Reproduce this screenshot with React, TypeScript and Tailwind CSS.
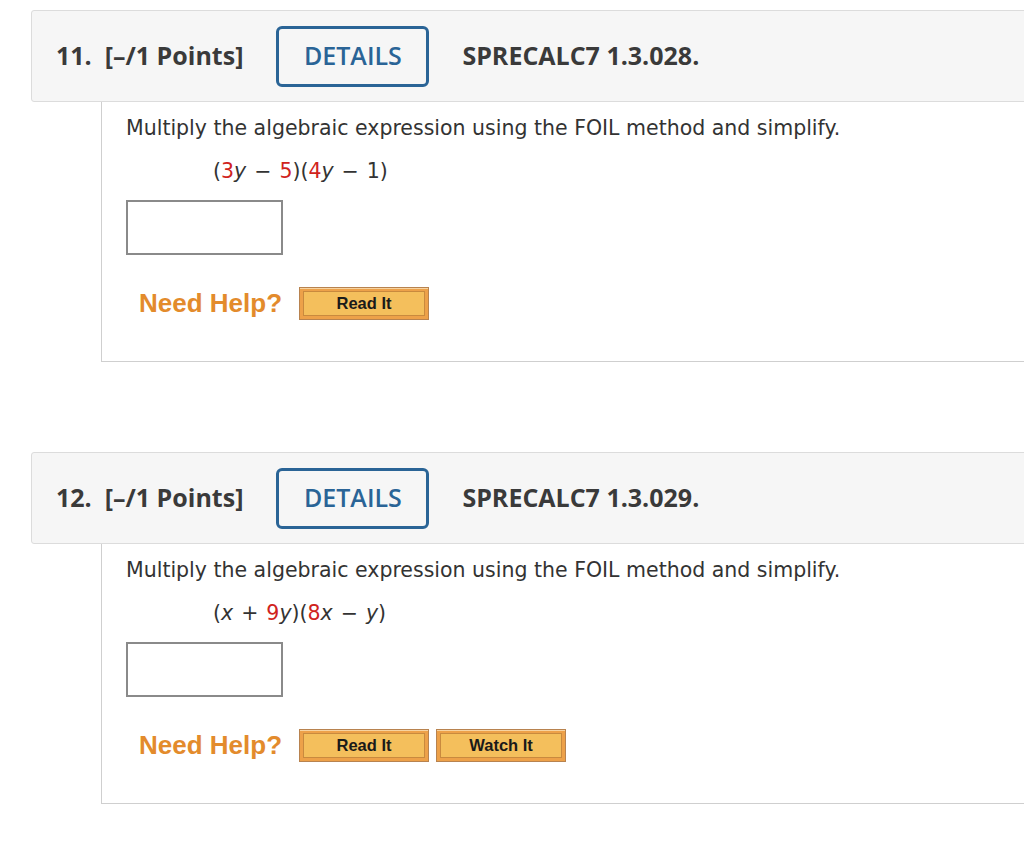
import React from 'react'

type Part = { t: string; red?: boolean; i?: boolean; op?: boolean }

const questions: {
  num: string
  code: string
  expr: Part[]
  watch?: boolean
}[] = [
  {
    num: '11.',
    code: 'SPRECALC7 1.3.028.',
    expr: [
      { t: '(' },
      { t: '3', red: true },
      { t: 'y', i: true },
      { t: '−', op: true },
      { t: '5', red: true },
      { t: ')(' },
      { t: '4', red: true },
      { t: 'y', i: true },
      { t: '−', op: true },
      { t: '1)' },
    ],
  },
  {
    num: '12.',
    code: 'SPRECALC7 1.3.029.',
    watch: true,
    expr: [
      { t: '(' },
      { t: 'x', i: true },
      { t: '+', op: true },
      { t: '9', red: true },
      { t: 'y', i: true },
      { t: ')(' },
      { t: '8', red: true },
      { t: 'x', i: true },
      { t: '−', op: true },
      { t: 'y', i: true },
      { t: ')' },
    ],
  },
]

function HelpButton({ label }: { label: string }) {
  return (
    <div className="h-[33px] w-[130px] border border-[#b8834f] bg-[#eda149] p-[3px] shadow-[inset_0_1px_0_#f7d3a0]">
      <div className="flex h-full items-center justify-center border border-[#c98a3e] bg-[#f4bf5c] text-[16.5px] font-bold text-[#1a1a1a] [font-family:'Liberation_Sans',Arial,sans-serif]">
        {label}
      </div>
    </div>
  )
}

export default function App() {
  return (
    <div className="min-h-[854px] w-[1024px] overflow-hidden bg-white pt-[10px] pl-[31px]">
      {questions.map((q, idx) => (
        <div key={q.num} className={idx > 0 ? 'mt-[90px]' : ''}>
          <div className="flex h-[92px] w-[1100px] items-center rounded-[3px] border border-[#dcdcdc] bg-[#f6f6f6] pl-[24px] text-[25px] font-bold text-[#3a3a3a] [font-family:'Open_Sans',sans-serif]">
            <span>{q.num}</span>
            <span className="ml-[13px]">[–/1 Points]</span>
            <div className="ml-[33px] flex h-[61px] w-[153px] items-center justify-center rounded-[6px] border-[3px] border-[#2a6496] font-semibold text-[#2a6496]">
              DETAILS
            </div>
            <span className="ml-[33px]">{q.code}</span>
          </div>
          <div className="ml-[70px] h-[260px] w-[1000px] border-b border-l border-[#cfcfcf] pt-[13px] pl-[24px] text-[#333] [font-family:'DejaVu_Sans',Verdana,sans-serif]">
            <p className="text-[20.5px] leading-[26px]">
              Multiply the algebraic expression using the FOIL method and simplify.
            </p>
            <p className="mt-[17px] ml-[87px] text-[20.5px] leading-[26px]">
              {q.expr.map((p, i) => (
                <span
                  key={i}
                  className={`${p.red ? 'text-[#d0231c]' : ''} ${p.i ? 'italic' : ''} ${p.op ? 'px-[8px]' : ''}`}
                >
                  {p.t}
                </span>
              ))}
            </p>
            <div className="mt-[16px] h-[55px] w-[157px] border-2 border-[#8a8a8a] bg-white" />
            <div className="mt-[29px] ml-[13px] flex items-center">
              <span className="text-[26px] font-bold text-[#e38b2c] [font-family:'Liberation_Sans',Arial,sans-serif]">
                Need Help?
              </span>
              <div className="ml-[17px] flex gap-[7px]">
                <HelpButton label="Read It" />
                {q.watch && <HelpButton label="Watch It" />}
              </div>
            </div>
          </div>
        </div>
      ))}
    </div>
  )
}
